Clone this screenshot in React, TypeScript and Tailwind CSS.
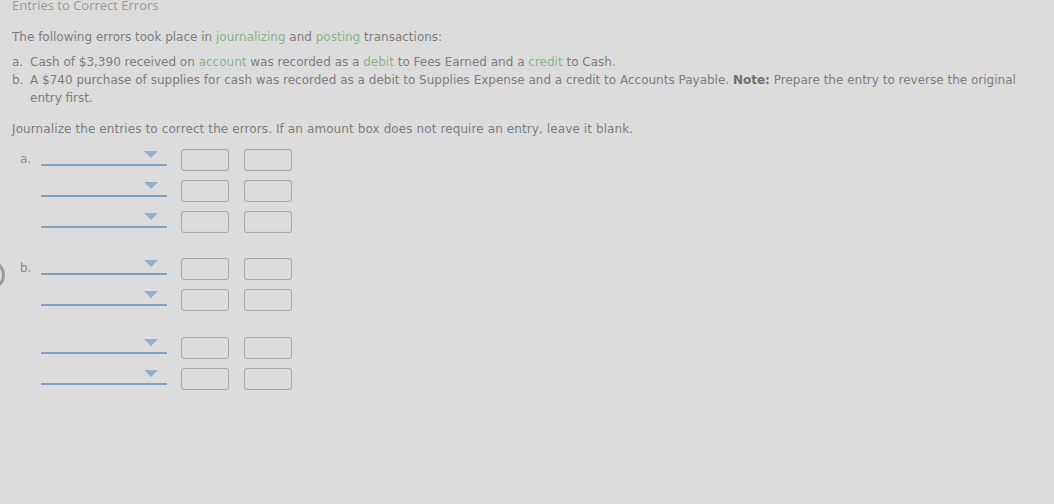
import React from "react";

function Row({ label }: { label?: string }) {
  return (
    <div className="flex items-start h-[22px]">
      <div className="w-[41px] pl-[20px] pt-[3px] text-[12px] leading-[14px] text-[#8a8a8a]">{label}</div>
      <div className="relative w-[126px] h-[17px] border-b-2 border-[#7fa2c0]">
        <div className="absolute right-[9px] top-[2px] w-0 h-0 border-l-[7px] border-r-[7px] border-t-[7px] border-l-transparent border-r-transparent border-t-[#8fb0cb]" />
      </div>
      <div className="ml-[14px] w-[48px] h-[22px] rounded-[3px] border-[1.5px] border-[#a8a8a8] shadow-[inset_0_0_1px_rgba(0,0,0,0.1)]" />
      <div className="ml-[15px] w-[48px] h-[22px] rounded-[3px] border-[1.5px] border-[#a8a8a8] shadow-[inset_0_0_1px_rgba(0,0,0,0.1)]" />
    </div>
  );
}

export default function App() {
  const g = "text-[#88b588]";
  return (
    <div className="relative w-[1054px] h-[504px] overflow-hidden bg-[#dcdcdc] font-['DejaVu_Sans',Verdana,sans-serif] text-[12px] text-[#7c7c7c]">
      <div className="absolute left-[-25px] top-[260px] w-[30px] h-[30px] rounded-full border-[3px] border-[#9a9a9a]" />
      <div className="pl-[12px] mt-[-3px] font-['Open_Sans',sans-serif] text-[13px] leading-[17px] text-[#989898]">
        Entries to Correct Errors
      </div>
      <div className="pl-[12px] mt-[14px] leading-[18px]">
        The following errors took place in <span className={g}>journalizing</span> and{" "}
        <span className={g}>posting</span> transactions:
      </div>
      <div className="pl-[12px] mt-[7px] leading-[18px]">
        <div className="flex">
          <span className="w-[18px] shrink-0">a.</span>
          <span>
            Cash of $3,390 received on <span className={g}>account</span> was recorded as a{" "}
            <span className={g}>debit</span> to Fees Earned and a <span className={g}>credit</span> to Cash.
          </span>
        </div>
        <div className="flex">
          <span className="w-[18px] shrink-0">b.</span>
          <p className="w-[1000px]">
            A $740 purchase of supplies for cash was recorded as a debit to Supplies Expense and a credit to
            Accounts Payable. <strong className="font-bold text-[#6e6e6e]">Note:</strong> Prepare the entry to reverse
            the original entry first.
          </p>
        </div>
      </div>
      <div className="pl-[12px] mt-[13px] leading-[18px] tracking-[0.1px]">
        Journalize the entries to correct the errors. If an amount box does not require an entry, leave it blank.
      </div>
      <div className="mt-[11px] flex flex-col gap-[9px]">
        <Row label="a." />
        <Row />
        <Row />
      </div>
      <div className="mt-[25px] flex flex-col gap-[9px]">
        <Row label="b." />
        <Row />
        <div className="h-[17px] -mt-[9px]" />
        <Row />
        <Row />
      </div>
    </div>
  );
}
